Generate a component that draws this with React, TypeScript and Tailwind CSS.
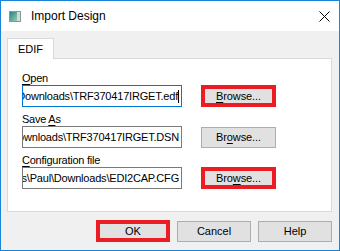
import React from 'react'

const font = { fontFamily: '"Liberation Sans", Arial, sans-serif' }

function TextBox({ value, focused }: { value: string; focused?: boolean }) {
  return (
    <div
      className={`w-[160px] h-[22px] bg-white border flex items-center justify-end overflow-hidden whitespace-nowrap pr-[2px] text-[11px] tracking-[-0.2px] text-black ${
        focused ? 'border-[#0078d7]' : 'border-[#7a7a7a]'
      }`}
    >
      <span>{value}</span>
      {focused && <span className="w-px h-[13px] bg-black shrink-0" />}
    </div>
  )
}

function Button({
  label,
  mnemonic,
  red,
  width = 'w-[75px]',
}: {
  label: string
  mnemonic: number
  red?: boolean
  width?: string
}) {
  return (
    <div
      className={`${width} h-[21px] bg-[#e1e1e1] border border-[#adadad] flex items-center justify-center text-[11px] tracking-[-0.1px] text-black ${
        red ? 'shadow-[inset_0_0_0_3px_#ec1c24] border-[#ec1c24] h-[22px]' : ''
      }`}
    >
      <span>
        {label.slice(0, mnemonic)}
        <u className="underline-offset-2">{label[mnemonic]}</u>
        {label.slice(mnemonic + 1)}
      </span>
    </div>
  )
}

function Field({
  label,
  mnemonic,
  value,
  focused,
  button,
}: {
  label: string
  mnemonic: number
  value: string
  focused?: boolean
  button: React.ReactNode
}) {
  return (
    <div className="flex flex-col">
      <div className="h-[13px] leading-[13px] text-[11px] tracking-[-0.25px] text-black">
        {label.slice(0, mnemonic)}
        <u className="underline-offset-2">{label[mnemonic]}</u>
        {label.slice(mnemonic + 1)}
      </div>
      <div className="flex items-center h-[22px] gap-[19px]">
        <TextBox value={value} focused={focused} />
        {button}
      </div>
    </div>
  )
}

export default function App() {
  return (
    <div
      className="w-[340px] h-[251px] border border-[#1883d7] bg-[#f0f0f0] flex flex-col overflow-hidden"
      style={font}
    >
      {/* title bar */}
      <div className="h-[30px] bg-white flex items-center justify-between pl-[8px] pr-[9px] shrink-0">
        <div className="flex items-center gap-[10px]">
          <svg width="12" height="11" viewBox="0 0 12 11">
            <defs>
              <linearGradient id="ic" x1="0" y1="0" x2="1" y2="1">
                <stop offset="0" stopColor="#2f7f8a" />
                <stop offset="1" stopColor="#8fd0a8" />
              </linearGradient>
            </defs>
            <rect x="0.5" y="0.5" width="11" height="10" fill="#e4ecea" stroke="#8c9895" />
            <rect x="1" y="1" width="7" height="9" fill="url(#ic)" />
            <rect x="8" y="1" width="3" height="9" fill="#cfdcd8" />
          </svg>
          <span className="text-[12px] text-black leading-none">Import Design</span>
        </div>
        <svg width="11" height="11" viewBox="0 0 11 11">
          <path d="M0.5 0.5 L10.5 10.5 M10.5 0.5 L0.5 10.5" stroke="#000" strokeWidth="1" />
        </svg>
      </div>

      {/* body */}
      <div className="flex flex-col pt-[7px] pl-[6px] pr-[7px]">
        <div className="w-[47px] h-[21px] bg-white border border-b-0 border-[#d9d9d9] flex items-center justify-center text-[11px] text-black -mb-px relative">
          EDIF
        </div>
        <div className="h-[154px] bg-white border border-[#d9d9d9] pt-[13px] pl-[14px] flex flex-col gap-[6px]">
          <Field
            label="Open"
            mnemonic={0}
            value={'C:\\Users\\Paul\\Downloads\\TRF370417IRGET.edf'}
            focused
            button={<Button label="Browse..." mnemonic={0} red />}
          />
          <Field
            label="Save As"
            mnemonic={5}
            value={'C:\\Users\\Paul\\Downloads\\TRF370417IRGET.DSN'}
            button={<Button label="Browse..." mnemonic={2} />}
          />
          <Field
            label="Configuration file"
            mnemonic={0}
            value={'C:\\Users\\Paul\\Downloads\\EDI2CAP.CFG'}
            button={<Button label="Browse..." mnemonic={3} red />}
          />
        </div>
      </div>

      {/* buttons */}
      <div className="flex justify-end items-center gap-[7px] pr-[7px] mt-[8px]">
        <div className="w-[74px] h-[22px] bg-[#e1e1e1] border border-[#ec1c24] shadow-[inset_0_0_0_3px_#ec1c24] flex items-center justify-center text-[11px] text-black">
          OK
        </div>
        <div className="w-[74px] h-[21px] bg-[#e1e1e1] border border-[#adadad] flex items-center justify-center text-[11px] text-black">
          Cancel
        </div>
        <div className="w-[74px] h-[21px] bg-[#e1e1e1] border border-[#adadad] flex items-center justify-center text-[11px] text-black">
          Help
        </div>
      </div>
    </div>
  )
}
